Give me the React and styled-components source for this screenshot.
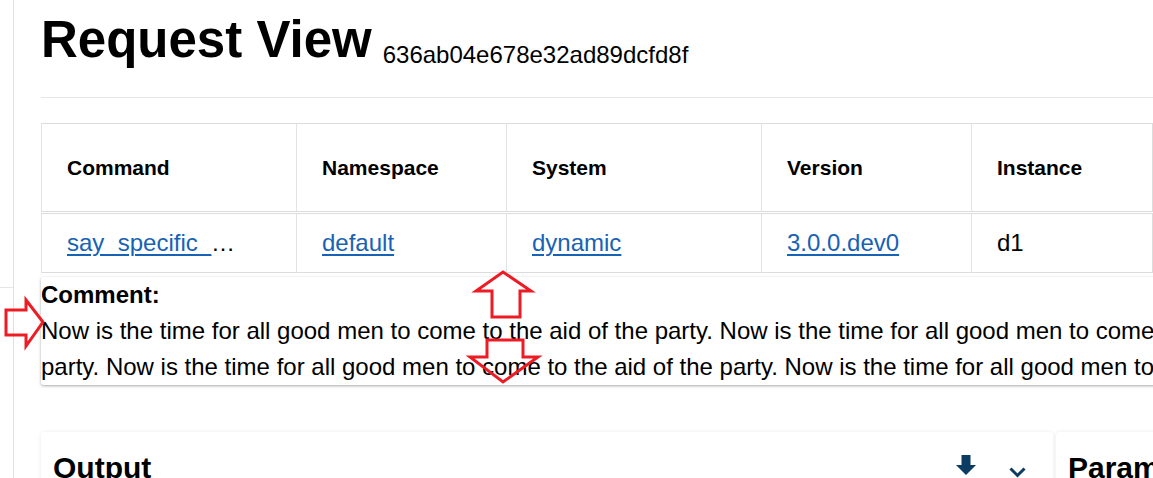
import React from "react";
import styled, { createGlobalStyle } from "styled-components";

const GlobalStyle = createGlobalStyle`
  html, body {
    margin: 0;
    padding: 0;
    overflow: hidden;
    background: #fff;
    font-family: "Liberation Sans", Arial, sans-serif;
    color: #000;
  }
`;

const Page = styled.div`
  display: flex;
  position: relative;
  min-height: 478px;
`;

const Sidebar = styled.div`
  width: 13px;
  flex-shrink: 0;
  border-right: 1px solid #e0e0e0;
`;

const SidebarBlock = styled.div`
  height: 287px;
  border-bottom: 1px solid #e6e6e6;
`;

const Main = styled.main`
  width: 1300px;
  flex-shrink: 0;
  padding-left: 27px;
`;

const Header = styled.div`
  display: flex;
  align-items: flex-end;
  gap: 11px;
  padding-top: 10px;
`;

const Title = styled.h1`
  margin: 0;
  font-size: 51px;
  line-height: 60px;
  font-weight: 700;
`;

const RequestId = styled.span`
  font-size: 24px;
  line-height: 24px;
  margin-bottom: 3px;
`;

const Divider = styled.hr`
  margin: 27px 0 0;
  border: 0;
  border-top: 1px solid #e6e6e6;
`;

const Table = styled.table`
  margin-top: 25px;
  width: 1111px;
  table-layout: fixed;
  border-collapse: collapse;
  border: 1px solid #dcdcdc;
`;

const Th = styled.th`
  height: 87px;
  padding: 0 25px;
  text-align: left;
  font-size: 21px;
  font-weight: 700;
  border-left: 1px solid #e3e3e3;
  border-bottom: 3px double #dcdcdc;
`;

const Td = styled.td`
  height: 58px;
  padding: 0 25px;
  font-size: 24px;
  border-left: 1px solid #e3e3e3;
  white-space: nowrap;
`;

const Link = styled.a`
  color: #1762b5;
  text-decoration: underline;
  text-decoration-thickness: 2px;
  text-underline-offset: 3px;
`;

const Truncate = styled.span`
  display: block;
  max-width: 172px;
  overflow: hidden;
  text-overflow: ellipsis;
  white-space: nowrap;
`;

const CommentBox = styled.div`
  margin-top: 4px;
  background: #fff;
  border-radius: 3px;
  box-shadow: 0 1px 3px rgba(0, 0, 0, 0.35);
  font-size: 24px;
  line-height: 36px;
`;

const CommentLabel = styled.div`
  font-weight: 700;
`;

const Cards = styled.div`
  display: flex;
  gap: 3px;
  margin-top: 47px;
`;

const Card = styled.section`
  width: ${(p) => p.$width}px;
  flex-shrink: 0;
  background: #fff;
  border-radius: 4px;
  box-shadow: 0 0 4px rgba(0, 0, 0, 0.08);
  padding: 18px 27px 0 12px;
  box-sizing: border-box;
  height: 80px;
`;

const CardHeader = styled.div`
  display: flex;
  align-items: center;
`;

const CardTitle = styled.h2`
  margin: 0;
  flex: 1;
  font-size: 30px;
  line-height: 36px;
  font-weight: 700;
`;

const Tools = styled.div`
  display: flex;
  align-items: center;
  gap: 33px;
  color: #0d3c63;
`;

const Overlay = styled.svg`
  position: absolute;
  left: 0;
  top: 0;
  pointer-events: none;
`;

const DownloadIcon = () => (
  <svg width="20" height="20" viewBox="0 0 20 20" style={{ marginTop: -6 }}>
    <path d="M5.5 0h9v10H20L10 20 0 10h5.5z" fill="currentColor" />
  </svg>
);

const ChevronIcon = () => (
  <svg width="17" height="11" viewBox="0 0 17 11" style={{ marginTop: 8 }}>
    <path d="M1.5 1.5l7 7 7-7" fill="none" stroke="currentColor" strokeWidth="3" />
  </svg>
);

const sentence = "Now is the time for all good men to come to the aid of the party.";
const comment =
  Array(3).fill(sentence).join(" ") +
  " Now is the time for all good men to come to the aid";

const App = () => {
  return (
    <>
      <GlobalStyle />
      <Page>
        <Sidebar>
          <SidebarBlock />
        </Sidebar>
        <Main>
          <Header>
            <Title>Request View</Title>
            <RequestId>636ab04e678e32ad89dcfd8f</RequestId>
          </Header>
          <Divider />
          <Table>
            <colgroup>
              <col style={{ width: 255 }} />
              <col style={{ width: 210 }} />
              <col style={{ width: 255 }} />
              <col style={{ width: 210 }} />
              <col style={{ width: 181 }} />
            </colgroup>
            <thead>
              <tr>
                <Th>Command</Th>
                <Th>Namespace</Th>
                <Th>System</Th>
                <Th>Version</Th>
                <Th>Instance</Th>
              </tr>
            </thead>
            <tbody>
              <tr>
                <Td>
                  <Truncate>
                    <Link href="#">say_specific_command</Link>
                  </Truncate>
                </Td>
                <Td>
                  <Link href="#">default</Link>
                </Td>
                <Td>
                  <Link href="#">dynamic</Link>
                </Td>
                <Td>
                  <Link href="#">3.0.0.dev0</Link>
                </Td>
                <Td>d1</Td>
              </tr>
            </tbody>
          </Table>
          <CommentBox>
            <CommentLabel>Comment:</CommentLabel>
            <div>{comment}</div>
          </CommentBox>
          <Cards>
            <Card $width={1012}>
              <CardHeader>
                <CardTitle>Output</CardTitle>
                <Tools>
                  <DownloadIcon />
                  <ChevronIcon />
                </Tools>
              </CardHeader>
            </Card>
            <Card $width={400}>
              <CardHeader>
                <CardTitle>Parameters</CardTitle>
              </CardHeader>
            </Card>
          </Cards>
        </Main>
        <Overlay width="1153" height="478" viewBox="0 0 1153 478">
          <g fill="none" stroke="#ed1c24" strokeWidth="3" strokeLinejoin="miter">
            <polygon points="6,310 26,310 26,300 43,322 26,346 26,335 6,335" />
            <polygon points="492,317 492,291 476,291 503,272 531,291 520,291 520,317" />
            <polygon points="487,340 523,340 523,357 538,357 503,382 470,357 487,357" />
          </g>
        </Overlay>
      </Page>
    </>
  );
};

export default App;
